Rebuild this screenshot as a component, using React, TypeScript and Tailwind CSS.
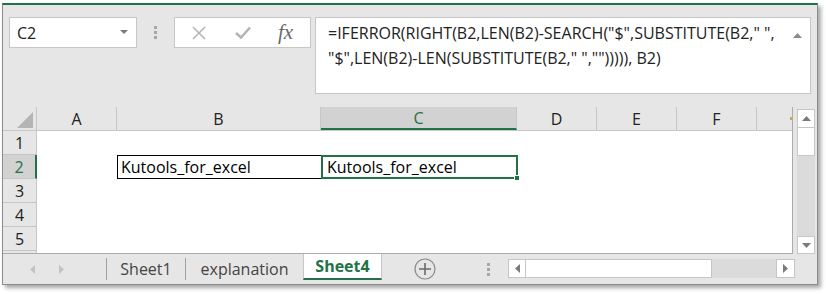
import React from "react";

const font = { fontFamily: '"Open Sans", "Liberation Sans", sans-serif' };

const cols = [
  { name: "A", w: "w-[80px]" },
  { name: "B", w: "w-[204px]" },
  { name: "C", w: "w-[196px]" },
  { name: "D", w: "w-[80px]" },
  { name: "E", w: "w-[80px]" },
  { name: "F", w: "w-[80px]" },
];

function Dots() {
  return (
    <div className="flex flex-col gap-[2px] items-center">
      <div className="w-[3px] h-[3px] bg-[#a6a6a6]" />
      <div className="w-[3px] h-[3px] bg-[#a6a6a6]" />
      <div className="w-[3px] h-[3px] bg-[#a6a6a6]" />
    </div>
  );
}

function FormulaBar() {
  return (
    <div className="h-[102px] flex items-start pt-[12px] pl-[6px]">
      <div className="w-[128px] h-[31px] bg-white border border-[#c6c6c6] flex items-center justify-between pl-[7px] pr-[8px]">
        <span className="text-[16px] text-[#222]">C2</span>
        <svg width="8" height="5" viewBox="0 0 8 5">
          <path d="M0 0 L8 0 L4 4 Z" fill="#7a7a7a" />
        </svg>
      </div>
      <div className="w-[37px] h-[31px] flex items-center justify-center">
        <Dots />
      </div>
      <div className="w-[137px] h-[31px] bg-white border border-[#c6c6c6] flex items-center">
        <svg className="ml-[17px]" width="14" height="14" viewBox="0 0 14 14">
          <path d="M1 1 L13 13 M13 1 L1 13" stroke="#b4b4b4" strokeWidth="1.6" />
        </svg>
        <svg className="ml-[29px]" width="16" height="13" viewBox="0 0 16 13">
          <path d="M1 7 L6 11.5 L15 1.5" stroke="#b4b4b4" strokeWidth="2.6" fill="none" />
        </svg>
        <span
          className="ml-[27px] text-[21px] italic text-[#6a6a6a] leading-none"
          style={{ fontFamily: '"Liberation Serif", serif' }}
        >
          fx
        </span>
      </div>
      <div className="ml-[4px] w-[496px] h-[77px] bg-white border border-[#c6c6c6] flex justify-between pl-[12px] pt-[3px] pr-[8px]">
        <div className="text-[16px] leading-[25px] text-[#222]">
          <div>=IFERROR(RIGHT(B2,LEN(B2)-SEARCH("$",SUBSTITUTE(B2," ",</div>
          <div>"$",LEN(B2)-LEN(SUBSTITUTE(B2," ",""))))), B2)</div>
        </div>
        <svg className="mt-[12px]" width="9" height="6" viewBox="0 0 9 6">
          <path d="M0 5 L4.5 0 L9 5 Z" fill="#8a8a8a" />
        </svg>
      </div>
    </div>
  );
}

function HeaderRow() {
  return (
    <div className="h-[23px] flex">
      <div className="w-[34px] h-full border-r border-[#c6c6c6] flex items-end justify-end pr-[3px] pb-[2px]">
        <svg width="16" height="16" viewBox="0 0 16 16">
          <path d="M0 16 L16 16 L16 0 Z" fill="#b4b4b4" />
        </svg>
      </div>
      {cols.map((c) =>
        c.name === "C" ? (
          <div
            key={c.name}
            className={`${c.w} h-full bg-[#d2d2d2] border-b-2 border-[#217346] border-r border-r-[#c6c6c6] flex items-center justify-center text-[16px] text-[#217346]`}
          >
            {c.name}
          </div>
        ) : (
          <div
            key={c.name}
            className={`${c.w} h-full border-r border-[#c6c6c6] flex items-center justify-center text-[16px] text-[#222]`}
          >
            {c.name}
          </div>
        )
      )}
      <div className="flex-1 h-full flex items-center justify-end">
        <span className="w-[2px] h-[3px] bg-[#d9a441]" />
      </div>
    </div>
  );
}

function RowHead({ n, sel }: { n: number; sel?: boolean }) {
  return sel ? (
    <div className="w-[34px] h-full bg-[#d2d2d2] border-r-2 border-[#217346] border-b border-b-[#c6c6c6] flex items-center justify-center text-[16px] text-[#217346]">
      {n}
    </div>
  ) : (
    <div className="w-[34px] h-full border-r border-b border-[#c6c6c6] flex items-center justify-center text-[16px] text-[#222]">
      {n}
    </div>
  );
}

function Grid() {
  return (
    <div className="h-[147px] flex">
      <div className="w-[790px] flex flex-col border-r border-[#ababab] border-b">
        <HeaderRow />
        <div className="flex-1 flex flex-col border-t border-[#c6c6c6]">
          <div className="h-[24px] flex">
            <RowHead n={1} />
            <div className="flex-1 bg-white" />
          </div>
          <div className="h-[24px] flex">
            <RowHead n={2} sel />
            <div className="flex-1 bg-white flex">
              <div className="w-[80px]" />
              <div className="w-[204px] h-full border-l border-y border-black flex items-center pl-[3px] text-[16px] text-black">
                Kutools_for_excel
              </div>
              <div className="relative w-[197px] h-full border-2 border-[#217346] flex items-center pl-[4px] text-[16px] text-black">
                Kutools_for_excel
                <div className="absolute right-[-4px] bottom-[-4px] w-[6px] h-[6px] bg-[#217346] border border-white" />
              </div>
            </div>
          </div>
          {[3, 4, 5].map((n) => (
            <div key={n} className="h-[24px] flex">
              <RowHead n={n} />
              <div className="flex-1 bg-white" />
            </div>
          ))}
          <div className="flex-1 flex">
            <div className="w-[34px] border-r border-[#c6c6c6]" />
            <div className="flex-1 bg-white" />
          </div>
        </div>
      </div>
      <div className="flex-1 flex flex-col items-center pt-[2px] pl-[2px]">
        <div className="w-[18px] flex-1 flex flex-col bg-[#dbdbdb]">
          <div className="h-[19px] bg-white border border-[#c6c6c6] flex items-center justify-center">
            <svg width="9" height="5" viewBox="0 0 9 5">
              <path d="M0 5 L4.5 0 L9 5 Z" fill="#7a7a7a" />
            </svg>
          </div>
          <div className="h-[28px] bg-white border border-[#c6c6c6] border-t-0" />
          <div className="flex-1" />
          <div className="h-[18px] bg-white border border-[#c6c6c6] flex items-center justify-center">
            <svg width="9" height="5" viewBox="0 0 9 5">
              <path d="M0 0 L9 0 L4.5 5 Z" fill="#7a7a7a" />
            </svg>
          </div>
        </div>
      </div>
    </div>
  );
}

function TabBar() {
  return (
    <div className="h-[30px] flex items-stretch">
      <div className="w-[103px] flex items-center">
        <svg className="ml-[27px]" width="5" height="9" viewBox="0 0 5 9">
          <path d="M5 0 L0 4.5 L5 9 Z" fill="#c2c2c2" />
        </svg>
        <svg className="ml-[24px]" width="5" height="9" viewBox="0 0 5 9">
          <path d="M0 0 L5 4.5 L0 9 Z" fill="#c2c2c2" />
        </svg>
      </div>
      <div className="w-px h-[22px] mt-[4px] bg-[#a0a0a0]" />
      <div className="w-[78px] flex items-center justify-center text-[16px] text-[#444]">Sheet1</div>
      <div className="w-px h-[22px] mt-[4px] bg-[#a0a0a0]" />
      <div className="w-[117px] flex items-center justify-center text-[16px] text-[#444]">explanation</div>
      <div className="w-[79px] h-[26px] bg-white border-l border-r border-[#c6c6c6] border-b-2 border-b-[#217346] flex items-center justify-center text-[16px] font-bold text-[#217346]">
        Sheet4
      </div>
      <div className="w-[86px] flex items-center justify-center">
        <svg width="22" height="22" viewBox="0 0 22 22">
          <circle cx="11" cy="11" r="10" fill="none" stroke="#8a8a8a" strokeWidth="1.2" />
          <path d="M11 5 L11 17 M5 11 L17 11" stroke="#6a6a6a" strokeWidth="1.6" />
        </svg>
      </div>
      <div className="w-[40px] flex items-center justify-center">
        <Dots />
      </div>
      <div className="flex mt-[5px] h-[19px] w-[287px] bg-[#dbdbdb]">
        <div className="w-[18px] bg-white border border-[#c6c6c6] flex items-center justify-center">
          <svg width="5" height="9" viewBox="0 0 5 9">
            <path d="M5 0 L0 4.5 L5 9 Z" fill="#7a7a7a" />
          </svg>
        </div>
        <div className="w-[186px] bg-white border border-[#c6c6c6] border-l-0" />
        <div className="flex-1" />
        <div className="w-[19px] bg-white border border-[#c6c6c6] flex items-center justify-center">
          <svg width="5" height="9" viewBox="0 0 5 9">
            <path d="M0 0 L5 4.5 L0 9 Z" fill="#7a7a7a" />
          </svg>
        </div>
      </div>
    </div>
  );
}

export default function App() {
  return (
    <div className="w-[826px] h-[294px] bg-white pl-[2px] pt-[3px]" style={font}>
      <div className="w-[816px] h-[282px] bg-[#e6e6e6] border-t-2 border-t-[#217346] border-x border-b border-[#8c8c8c] shadow-[3px_3px_4px_rgba(0,0,0,0.35)] flex flex-col">
        <FormulaBar />
        <Grid />
        <TabBar />
      </div>
    </div>
  );
}
